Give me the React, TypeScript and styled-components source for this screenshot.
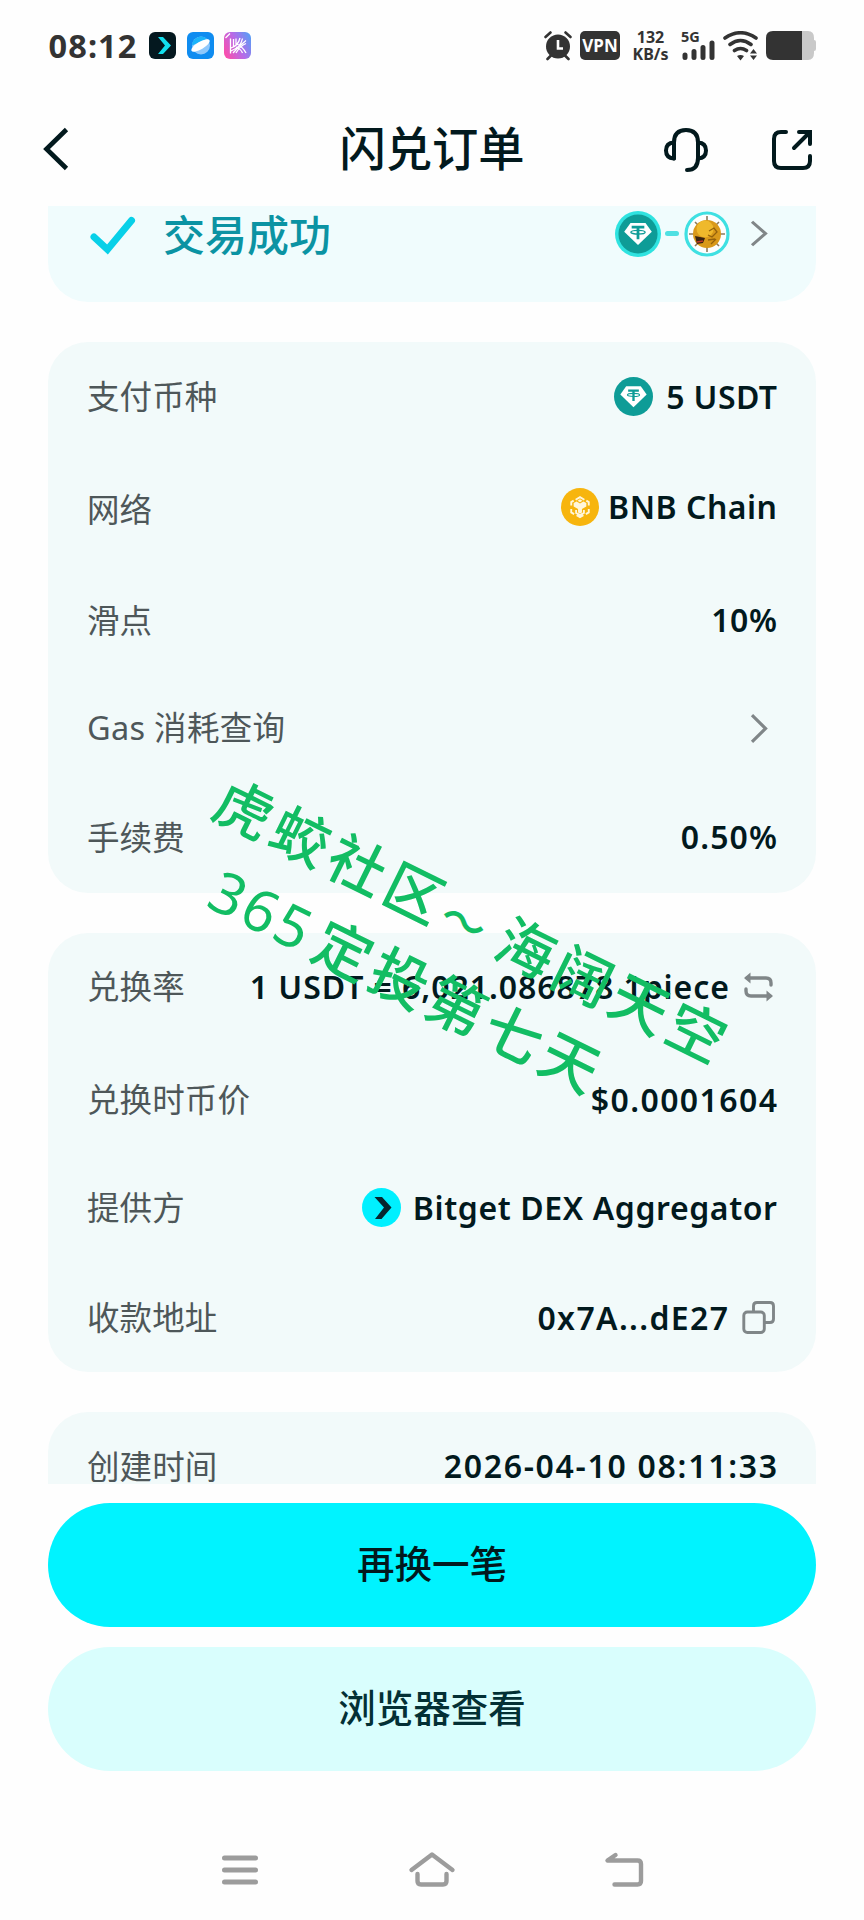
import React from 'react';
import styled, { createGlobalStyle } from 'styled-components';

const Global = createGlobalStyle`
  * { box-sizing: border-box; }
  body { margin: 0; background: #fefefe; }
`;

const Screen = styled.div`
  position: relative;
  width: 864px;
  height: 1920px;
  overflow: hidden;
  display: flex;
  flex-direction: column;
  background: #fefefe;
  color: #02191d;
  font-family: 'Noto Sans', 'Noto Sans CJK SC', sans-serif;
`;

const StatusBar = styled.div`
  height: 91px;
  padding: 0 48px;
  display: flex;
  align-items: center;
  justify-content: space-between;
  color: #333;
`;

const AppIcons = styled.div`
  display: flex;
  align-items: center;
  gap: 10.5px;
`;

const SystemIcons = styled.div`
  display: grid;
  grid-template-columns: 36px 40px 61px 42px 43px 50px;
  align-items: center;
`;

const Clock = styled.span`
  width: 90.5px;
  padding-left: 0.5px;
  font-size: 32.5px;
  line-height: 36px;
  font-weight: 700;
  letter-spacing: 1.1px;
  white-space: nowrap;
`;

const VpnTag = styled.span`
  height: 29px;
  border-radius: 5px;
  background: #333;
  color: #fefefe;
  font-size: 17px;
  font-weight: 700;
  line-height: 29px;
  text-align: center;
`;

const NetSpeed = styled.span`
  display: flex;
  flex-direction: column;
  align-items: center;
  font-size: 16px;
  line-height: 16.5px;
  font-weight: 700;
`;

const Signal = styled.span`
  position: relative;
  display: block;
  height: 29px;

  svg {
    display: block;
  }
`;

const SignalTag = styled.span`
  position: absolute;
  left: 0;
  top: -3px;
  font-size: 14.5px;
  line-height: 16px;
  font-weight: 700;
`;

const TitleBar = styled.header`
  height: 115px;
  padding: 0 48px;
  display: grid;
  grid-template-columns: 1fr auto 1fr;
  align-items: center;
`;

const BackIcon = styled.svg`
  margin-left: -8px;
`;

const Title = styled.h1`
  margin: 0;
  font-size: 46.3px;
  line-height: 60px;
  font-weight: 500;
`;

const Actions = styled.div`
  display: flex;
  justify-content: flex-end;
  align-items: center;
  gap: 62px;
  padding: 3px 3px 0 0;
`;

const Scroll = styled.main`
  height: 1278px;
  padding: 0 48px;
  overflow: hidden;
  display: flex;
  flex-direction: column;
  flex-shrink: 0;
`;

const Card = styled.section<{ $top?: number; $height: number }>`
  flex-shrink: 0;
  height: ${(p) => p.$height}px;
  margin-top: ${(p) => p.$top ?? 0}px;
  border-radius: 40px;
  background: #f2fafa;
  padding: 0 39px;
`;

const ResultCard = styled(Card)`
  border-radius: 0 0 40px 40px;
  background: #f0fcfd;
  display: flex;
  align-items: flex-start;
  justify-content: space-between;
`;

const ResultStatus = styled.div`
  height: 58px;
  display: flex;
  align-items: center;
  gap: 27px;
  padding-left: 1px;
`;

const ResultPair = styled.div`
  height: 55px;
  display: flex;
  align-items: center;
  gap: 4.5px;
`;

const PairDash = styled.span`
  width: 14px;
  height: 5px;
  border-radius: 3px;
  background: #4fe0e2;
`;

const ResultText = styled.span`
  font-size: 42px;
  line-height: 50px;
  font-weight: 500;
  color: #0b93a3;
`;

const Row = styled.div<{ $height: number }>`
  height: ${(p) => p.$height}px;
  display: flex;
  align-items: center;
  justify-content: space-between;
`;

const Label = styled.span<{ $drop?: number; $track?: number }>`
  padding-top: ${(p) => p.$drop ?? 0}px;
  font-size: 32.5px;
  line-height: 40px;
  letter-spacing: ${(p) => p.$track ?? 0.1}px;
  color: #4e5759;
  white-space: nowrap;
`;

const Value = styled.span<{ $gap?: number; $lift?: number; $inset?: number }>`
  display: flex;
  align-items: center;
  gap: ${(p) => p.$gap ?? 12}px;
  padding-bottom: ${(p) => p.$lift ?? 0}px;
  padding-right: ${(p) => p.$inset ?? 0}px;
`;

const ValueText = styled.span<{ $track?: number }>`
  font-size: 32px;
  line-height: 40px;
  font-weight: 600;
  letter-spacing: ${(p) => p.$track ?? 0}px;
  margin-right: ${(p) => -(p.$track ?? 0)}px;
  white-space: nowrap;
`;

const Footer = styled.div`
  padding: 19px 48px 0;
  display: flex;
  flex-direction: column;
  gap: 20px;
`;

const PillButton = styled.button<{ $soft?: boolean }>`
  height: 124px;
  padding: 0 0 7px;
  border: 0;
  border-radius: 62px;
  background: ${(p) => (p.$soft ? '#d9fefd' : '#00f3ff')};
  color: ${(p) => (p.$soft ? '#033035' : '#02191d')};
  font-family: inherit;
  font-size: 37.5px;
  font-weight: 500;
`;

const NavBar = styled.nav`
  margin-top: 68px;
  height: 61px;
  display: flex;
  justify-content: center;
  align-items: center;
  gap: 144px;
`;

const Watermark = styled.div`
  position: absolute;
  left: 237px;
  top: 758px;
  transform-origin: 0 0;
  transform: rotate(26.3deg);
  color: #12bd63;
  font-size: 58px;
  font-weight: 500;
  line-height: 83px;
  letter-spacing: 5.2px;
  white-space: nowrap;
`;

const WatermarkLine = styled.div<{ $indent?: number }>`
  height: 83px;
  margin-left: ${(p) => p.$indent ?? 0}px;
`;

const Tilde = styled.span`
  font-size: 46px;
  letter-spacing: 16px;
`;

const Digits = styled.span`
  font-weight: 400;
  letter-spacing: 3px;
  margin-right: 7px;
`;

const WifiIcon = styled.svg`
  display: block;
`;

const Tether = ({ size, ring }: { size: number; ring?: boolean }) => (
  <svg width={size} height={size} viewBox="0 0 40 40">
    <circle cx="20" cy="20" r="20" fill={ring ? '#2fe3e0' : '#0e9c97'} />
    {ring && <circle cx="20" cy="20" r="17" fill="#0e9c97" />}
    <path d={ring ? 'M13.5 10.500h13l5.500 7.500L20 29.500 8 18z' : 'M12.500 9.500h15l6 8.500L20 31 6.500 18z'} fill="#fff" />
    <path d="M14.500 14h11M20 14v10.500" stroke="#0e9c97" strokeWidth="2.400" fill="none" />
    <ellipse cx="20" cy="18.400" rx="6.200" ry="1.600" stroke="#0e9c97" strokeWidth="1.200" fill="none" />
  </svg>
);

const SunToken = () => (
  <svg width="46" height="46" viewBox="0 0 46 46">
    <circle cx="23" cy="23" r="21" fill="#fdfefe" stroke="#3fe0e2" strokeWidth="3.200" />
    <path d="M23 5v36M5 23h36M11 11l24 24M35 11L11 35" stroke="#8b7a5e" strokeWidth="1.600" />
    <circle cx="23" cy="23" r="14" fill="#d9991a" />
    <circle cx="21" cy="18" r="8.500" fill="#efb92c" />
    <path d="M25 20l5-3 3 4-5 5-4-2M24 29l7-1M27 33l5-5" stroke="#94620c" strokeWidth="1.300" fill="none" />
    <path d="M11 25l10 2-2 5-6 1z" fill="#3a2410" />
    <path d="M13 31l6-1" stroke="#c0392b" strokeWidth="1.600" />
  </svg>
);

const BnbIcon = () => (
  <svg width="38" height="38" viewBox="0 0 39 39" fill="none">
    <circle cx="19.500" cy="19.500" r="19.500" fill="#f7b50e" />
    <path
      d="M15 12l4.500-2.600L24 12M10.500 18v-3.500l2.500-1.500M28.500 18v-3.500L26 13M10.500 21.500v3.500l3 1.800M28.500 21.500v3.500l-3 1.800M16 28l3.500 2 3.500-2M15.500 22.500v3l4 2.300 4-2.300v-3"
      stroke="#fff6dc"
      strokeWidth="1.900"
    />
    <path d="M13 15.500l3-1.600 3.500 2 3.500-2 3 1.600v3.400l-4.500 2.600v3.600l-2 1.100-2-1.100v-3.600L13 18.900z" fill="#fff6dc" />
    <path d="M17 13l2.500-1.400L22 13l-2.500 1.500z" fill="#fff6dc" />
  </svg>
);

const BitgetIcon = () => (
  <svg width="39" height="39" viewBox="0 0 39 39">
    <circle cx="19.500" cy="19.500" r="19.500" fill="#00f0ff" />
    <path d="M12.500 9h7.500L29.500 19.500 19.500 31h-6.500l9-11.500z" fill="#062730" />
  </svg>
);

const SwapIcon = () => (
  <svg width="31" height="32" viewBox="0 0 31 32" fill="none">
    <path d="M4 7h19q5 0 5 5v2M27 25H8q-5 0-5-5v-2" stroke="#808688" strokeWidth="3.400" strokeLinecap="round" />
    <path d="M7.500 1.500v11L1 7zM23.500 19.500v11L30 25z" fill="#808688" />
  </svg>
);

const CopyIcon = () => (
  <svg width="33" height="33" viewBox="0 0 33 33" fill="none" stroke="#808688" strokeWidth="2.900">
    <rect x="1.800" y="11" width="20.500" height="20.500" rx="3.500" />
    <path d="M11.500 11V5q0-3.500 3.500-3.500h13q3.500 0 3.500 3.500v13q0 3.500-3.500 3.500h-5.500" />
  </svg>
);

const ChevronSvg = styled.svg<{ $before?: number }>`
  margin: 0 9px 0 ${(p) => p.$before ?? 0}px;
`;

const Chevron = ({ h, before }: { h: number; before?: number }) => (
  <ChevronSvg $before={before} width={18} height={h} viewBox="0 0 18 30" preserveAspectRatio="none" fill="none">
    <path d="M2 2l13.500 13L2 28" stroke="#808688" strokeWidth="3.200" />
  </ChevronSvg>
);

export default function App() {
  return (
    <Screen>
      <Global />
      <StatusBar>
        <AppIcons>
          <Clock>08:12</Clock>
          <svg width="27" height="27" viewBox="0 0 27 27">
            <rect width="27" height="27" rx="6" fill="#04181f" />
            <path d="M9 5h5l8 8.500-8 8.500H9l7-8.500z" fill="#12dfee" />
          </svg>
          <svg width="27" height="27" viewBox="0 0 27 27">
            <rect width="27" height="27" rx="6" fill="#0f8cf0" />
            <circle cx="14" cy="13.500" r="9" fill="#8fc8fb" />
            <path d="M5 13.500a9 9 0 0 1 15-6.500z" fill="#1cb4fa" />
            <ellipse cx="13.500" cy="13.500" rx="10.500" ry="3.700" fill="#fff" transform="rotate(-30 13.500 13.500)" />
          </svg>
          <svg width="27" height="27" viewBox="0 0 27 27">
            <defs>
              <linearGradient id="kg" x1="0" y1="0.700" x2="1" y2="0.200">
                <stop offset="0" stopColor="#f84fae" />
                <stop offset="0.500" stopColor="#b76be8" />
                <stop offset="1" stopColor="#5a9cf5" />
              </linearGradient>
            </defs>
            <rect width="27" height="27" rx="6" fill="url(#kg)" />
            <path
              d="M1.500 6L6 1.500M6.500 6.500v15M9.500 7v8M12 6.500v6M7 16Q14 14 16 6M7 19Q17 15 18.500 6.500M9 21Q15 14 22 8.500M12 21Q16 14 22 11.500M13 12Q19 15 22 21M12 15Q17 17 18.500 21"
              stroke="#fff"
              strokeWidth="1.300"
              fill="none"
            />
          </svg>
        </AppIcons>
        <SystemIcons>
          <svg width="28" height="30" viewBox="0 0 28 30">
            <path d="M1.500 6l5-4.500M26.500 6l-5-4.500M3.500 28l4-4M24.500 28l-4-4" stroke="#333" strokeWidth="2.600" strokeLinecap="round" />
            <circle cx="14" cy="15.500" r="12" fill="#333" />
            <path d="M14 9v8.500h5" stroke="#fff" strokeWidth="2.600" fill="none" />
          </svg>
          <VpnTag>VPN</VpnTag>
          <NetSpeed>
            <span>132</span>
            <span>KB/s</span>
          </NetSpeed>
          <Signal>
            <SignalTag>5G</SignalTag>
            <svg width="34" height="29" viewBox="0 0 34 29">
              <path d="M4 24v2.500M13 20.500v6M22 16.500v10M31 12v14.500" stroke="#333" strokeWidth="5" strokeLinecap="round" />
            </svg>
          </Signal>
          <WifiIcon width="36" height="30" viewBox="0 0 36 30" fill="none">
            <path d="M2 7Q17.500-3.500 33 7M7 13.500Q17.500 5.500 28 13.500M11.500 19.500Q17.500 15.500 23.500 19.500" stroke="#333" strokeWidth="3.600" strokeLinecap="round" />
            <path d="M14 25q3.500-2 7 0l-3.500 4.500zM27 22.500l3.500-4.500 3.500 4.500zM27 24.500h7L30.500 29z" fill="#333" />
          </WifiIcon>
          <svg width="50" height="29" viewBox="0 0 50 29">
            <path d="M36 0h6q6 0 6 7v2q2 0 2 2v7q0 2-2 2v2q0 7-6 7h-6z" fill="#c9c9c9" />
            <path d="M36 0v29H7q-7 0-7-7V7q0-7 7-7z" fill="#333" />
          </svg>
        </SystemIcons>
      </StatusBar>
      <TitleBar>
        <BackIcon width="30" height="44" viewBox="0 0 30 44" fill="none">
          <path d="M26.500 2.500L6.500 22l20 19.500" stroke="#02191d" strokeWidth="4.700" />
        </BackIcon>
        <Title>闪兑订单</Title>
        <Actions>
          <svg width="46" height="46" viewBox="0 0 46 46" fill="none" stroke="#02191d" strokeWidth="4" strokeLinecap="round" strokeLinejoin="round">
            <path d="M11 31.500V15.500Q11 3 23 3T35 15.500V31Q35 43 24 43" />
            <path d="M11 15.500Q3 16 3 23.500T11 31.500M35 15.500Q43 16 43 23.500T35 31.500" />
          </svg>
          <svg width="42" height="42" viewBox="0 0 42 42" fill="none" stroke="#02191d" strokeWidth="4" strokeLinecap="round">
            <path d="M15 3H10Q3 3 3 10V32Q3 39 10 39H32Q39 39 39 32V27M28 3H39V15M38 4L23 19" />
          </svg>
        </Actions>
      </TitleBar>
      <Scroll>
        <ResultCard $height={96}>
          <ResultStatus>
            <svg width="48" height="40" viewBox="0 0 48 40" fill="none">
              <path d="M6 22l13.500 12.500L43.500 5.500" stroke="#08d0e8" strokeWidth="7" strokeLinecap="round" />
            </svg>
            <ResultText>交易成功</ResultText>
          </ResultStatus>
          <ResultPair>
            <Tether size={46} ring />
            <PairDash />
            <SunToken />
            <Chevron h={27} before={16} />
          </ResultPair>
        </ResultCard>
        <Card $top={40} $height={551}>
          <Row $height={110}>
            <Label>支付币种</Label>
            <Value $lift={1} $gap={13}><Tether size={39} /><ValueText $track={0.4}>5 USDT</ValueText></Value>
          </Row>
          <Row $height={112}>
            <Label $drop={4}>网络</Label>
            <Value $gap={9.5} $lift={3}><BnbIcon /><ValueText $track={0.5}>BNB Chain</ValueText></Value>
          </Row>
          <Row $height={112}>
            <Label $drop={1}>滑点</Label>
            <ValueText $track={0.6}>10%</ValueText>
          </Row>
          <Row $height={104}>
            <Label $track={0.3}>Gas 消耗查询</Label>
            <Chevron h={31} />
          </Row>
          <Row $height={113}>
            <Label $drop={3}>手续费</Label>
            <Value><ValueText $track={1.1}>0.50%</ValueText></Value>
          </Row>
        </Card>
        <Card $top={40} $height={439}>
          <Row $height={108}>
            <Label>兑换率</Label>
            <Value $gap={14} $inset={3}><ValueText $track={0.94}>1 USDT = 6,021.086878 1piece</ValueText><SwapIcon /></Value>
          </Row>
          <Row $height={118}>
            <Label>兑换时币价</Label>
            <ValueText $track={1.4}>$0.0001604</ValueText>
          </Row>
          <Row $height={98}>
            <Label>提供方</Label>
            <Value $gap={12} $lift={1}><BitgetIcon /><ValueText $track={0.6}>Bitget DEX Aggregator</ValueText></Value>
          </Row>
          <Row $height={121}>
            <Label>收款地址</Label>
            <Value $gap={14} $inset={2}><ValueText $track={1.35}>0x7A...dE27</ValueText><CopyIcon /></Value>
          </Row>
        </Card>
        <Card $top={40} $height={200}>
          <Row $height={108}>
            <Label $drop={2}>创建时间</Label>
            <ValueText $track={1.7}>2026-04-10 08:11:33</ValueText>
          </Row>
        </Card>
      </Scroll>
      <Footer>
        <PillButton>再换一笔</PillButton>
        <PillButton $soft>浏览器查看</PillButton>
      </Footer>
      <NavBar>
        <svg width="48" height="40" viewBox="0 0 48 40" stroke="#9c9c9c" strokeWidth="5" strokeLinecap="round">
          <path d="M8.500 8h31M8.500 20h31M8.500 32h31" />
        </svg>
        <svg width="48" height="40" viewBox="0 0 48 40" fill="none" stroke="#9c9c9c" strokeWidth="4.400" strokeLinecap="round" strokeLinejoin="round">
          <path d="M3.500 20L24 4.500 44.500 20M9.500 24v7q0 3.500 3.500 3.500h22q3.500 0 3.500-3.500v-7" />
        </svg>
        <svg width="48" height="40" viewBox="0 0 48 40" fill="none" stroke="#9c9c9c" strokeWidth="4.400" strokeLinecap="round" strokeLinejoin="round">
          <path d="M15.500 5L7.500 10.500H37.500Q41 10.500 41 14V31Q41 34.500 37.500 34.500H14.500" />
        </svg>
      </NavBar>
      <Watermark>
        <WatermarkLine>虎蛟社区<Tilde>～</Tilde>海阔天空</WatermarkLine>
        <WatermarkLine $indent={36}><Digits>365</Digits>定投第七天</WatermarkLine>
      </Watermark>
    </Screen>
  );
}
